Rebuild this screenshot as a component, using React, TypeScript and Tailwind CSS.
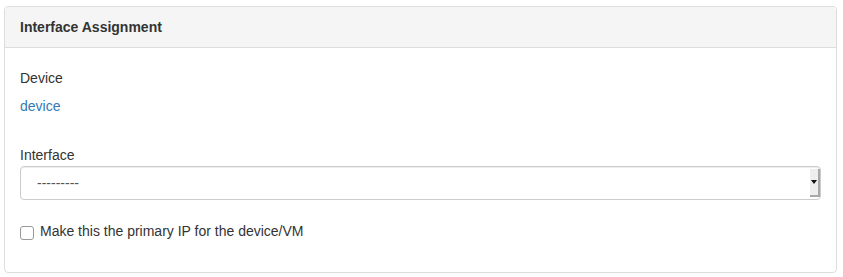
export default function App() {
  return (
    <div className="bg-white w-[843px] h-[277px] pt-[6px] px-[4px] font-['Liberation_Sans',Arial,sans-serif] text-[14px] text-[#333]">
      <div className="w-[833px] h-[267px] border border-[#ddd] rounded-[4px] overflow-hidden">
        {/* heading */}
        <div className="h-[41px] bg-[#f5f5f5] border-b border-[#ddd] px-[15px] flex items-center">
          <h3 className="font-bold text-[14px] text-[#333] leading-[20px]">Interface Assignment</h3>
        </div>

        <div className="px-[15px] pt-[20px]">
          <div className="leading-[20px]">Device</div>
          <div className="leading-[20px] mt-[8px]">
            <a className="text-[#337ab7]">device</a>
          </div>

          <div className="leading-[20px] mt-[29px]">Interface</div>
          <div className="mt-[1px] h-[34px] border border-[#ccc] rounded-[4px] flex items-stretch justify-between shadow-[inset_0_1px_1px_rgba(0,0,0,0.075)]">
            <span className="pl-[16px] flex items-center text-[#555]">---------</span>
            <div className="w-[10px] my-[2px] bg-[#eee] border-r-2 border-b-2 border-[#a8a8a8] flex items-center justify-center">
              <svg width="6" height="4" viewBox="0 0 6 4">
                <path d="M0 0h6L3 4z" fill="#111" />
              </svg>
            </div>
          </div>

          <label className="flex items-center mt-[21px] leading-[20px]">
            <span className="w-[14px] h-[14px] border border-[#999] rounded-[3px] bg-white mr-[6px] mt-[4px]" />
            <span>Make this the primary IP for the device/VM</span>
          </label>
        </div>
      </div>
    </div>
  );
}
